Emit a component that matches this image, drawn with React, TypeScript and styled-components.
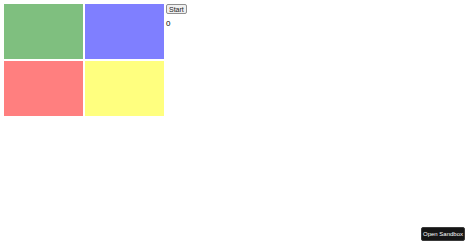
import React, { useState } from 'react';
import styled, { createGlobalStyle } from 'styled-components';

const GlobalStyle = createGlobalStyle`
  body {
    margin: 4px;
    font-family: 'Liberation Sans', Arial, sans-serif;
    background: #fff;
  }
`;

const Layout = styled.div`
  display: flex;
  align-items: flex-start;
  gap: 2px;
`;

const Board = styled.div`
  display: grid;
  grid-template-columns: 79px 79px;
  grid-template-rows: 55px 55px;
  gap: 2px;
`;

const Pad = styled.div<{ $color: string }>`
  background: ${(p) => p.$color};
  opacity: 0.5;
  cursor: pointer;
`;

const Side = styled.div`
  display: flex;
  flex-direction: column;
  align-items: flex-start;
`;

const StartButton = styled.button`
  font-family: 'Liberation Sans', Arial, sans-serif;
  font-size: 7px;
  line-height: 7px;
  padding: 0 2px;
  margin: 0;
  height: 10px;
  background: #f0f0f0;
  border: 1px solid #8f8f8f;
  border-radius: 2px;
  color: #222;
`;

const Score = styled.div`
  font-size: 8px;
  line-height: 9px;
  margin-top: 5px;
  color: #000;
`;

const SandboxButton = styled.a`
  position: fixed;
  right: 9px;
  bottom: 7px;
  width: 44px;
  height: 14px;
  display: flex;
  align-items: center;
  justify-content: center;
  background: #151515;
  border: 1px solid #3a3a3a;
  box-sizing: border-box;
  border-radius: 2px;
  color: #fff;
  font-size: 6px;
  white-space: nowrap;
  text-decoration: none;
`;

const pads = ['#008000', '#0000ff', '#ff0000', '#ffff00'];

export default function App() {
  const [score] = useState(0);
  return (
    <>
      <GlobalStyle />
      <Layout>
        <Board>
          {pads.map((c) => (
            <Pad key={c} $color={c} />
          ))}
        </Board>
        <Side>
          <StartButton>Start</StartButton>
          <Score>{score}</Score>
        </Side>
      </Layout>
      <SandboxButton href="#">Open Sandbox</SandboxButton>
    </>
  );
}
